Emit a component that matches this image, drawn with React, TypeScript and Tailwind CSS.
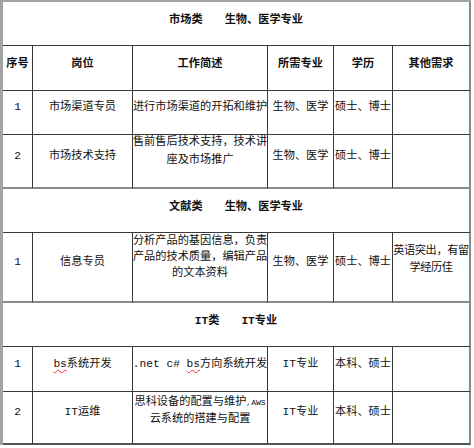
import type { ReactNode } from "react";

const font = { fontFamily: '"Liberation Mono", "Noto Sans CJK SC", monospace' };

function Cell({ children, className = "" }: { children?: ReactNode; className?: string }) {
  return (
    <div className={`flex items-center justify-center text-center whitespace-nowrap border-r border-b border-[#3a3a3a] ${className}`}>
      <div>{children}</div>
    </div>
  );
}

function Section({ left, right }: { left: string; right: string }) {
  return (
    <div className="col-span-6 flex items-center justify-center pb-[7px] font-bold border-r-2 border-r-[#8a8a8a] border-b border-[#3a3a3a]">
      <span>{left}</span>
      <span className="w-[22px]" />
      <span>{right}</span>
    </div>
  );
}

const spell = "underline decoration-wavy decoration-red-500 decoration-1 underline-offset-2";

export default function App() {
  return (
    <div className="w-[474px] h-[448px] bg-white overflow-hidden text-[11.2px] text-[#111]" style={font}>
      <div className="border-l-[3px] border-t-[2px] border-[#a3a3a3] w-[471px]">
        <div className="grid grid-cols-[30px_100px_135px_66px_59px_78px] grid-rows-[44px_45px_44px_54px_44px_70px_44px_45px_53px]">
          <Section left="市场类" right="生物、医学专业" />

          <Cell className="font-bold pb-[7px]">序号</Cell>
          <Cell className="font-bold pb-[7px]">岗位</Cell>
          <Cell className="font-bold pb-[7px]">工作简述</Cell>
          <Cell className="font-bold pb-[7px]">所需专业</Cell>
          <Cell className="font-bold pb-[7px]">学历</Cell>
          <Cell className="font-bold pb-[7px] border-r-2 border-r-[#8a8a8a]">其他需求</Cell>

          <Cell className="pb-[10px]">1</Cell>
          <Cell className="pb-[10px]">市场渠道专员</Cell>
          <Cell className="pb-[10px]">进行市场渠道的开拓和维护</Cell>
          <Cell className="pb-[10px]">生物、医学</Cell>
          <Cell className="pb-[10px]">硕士、博士</Cell>
          <Cell className="border-r-2 border-r-[#8a8a8a]" />

          <Cell className="pb-[10px] border-b-2 border-b-[#8a8a8a]">2</Cell>
          <Cell className="pb-[10px] border-b-2 border-b-[#8a8a8a]">市场技术支持</Cell>
          <Cell className="pb-[20px] leading-[18px] border-b-2 border-b-[#8a8a8a]">
            售前售后技术支持，技术讲
            <br />
            座及市场推广
          </Cell>
          <Cell className="pb-[10px] border-b-2 border-b-[#8a8a8a]">生物、医学</Cell>
          <Cell className="pb-[10px] border-b-2 border-b-[#8a8a8a]">硕士、博士</Cell>
          <Cell className="border-b-2 border-b-[#8a8a8a] border-r-2 border-r-[#8a8a8a]" />

          <Section left="文献类" right="生物、医学专业" />

          <Cell className="pb-[10px] border-b-2 border-b-[#8a8a8a]">1</Cell>
          <Cell className="pb-[10px] border-b-2 border-b-[#8a8a8a]">信息专员</Cell>
          <Cell className="pb-[20px] leading-[16px] border-b-2 border-b-[#8a8a8a]">
            分析产品的基因信息，负责
            <br />
            产品的技术质量，编辑产品
            <br />
            的文本资料
          </Cell>
          <Cell className="pb-[10px] border-b-2 border-b-[#8a8a8a]">生物、医学</Cell>
          <Cell className="pb-[10px] border-b-2 border-b-[#8a8a8a]">硕士、博士</Cell>
          <Cell className="pb-[14px] leading-[17px] tracking-[-0.4px] border-b-2 border-b-[#8a8a8a] border-r-2 border-r-[#8a8a8a]">
            英语突出，有留
            <br />
            学经历佳
          </Cell>

          <Section left="IT类" right="IT专业" />

          <Cell className="pb-[10px]">1</Cell>
          <Cell className="pb-[10px]">
            <span className={spell}>bs</span>系统开发
          </Cell>
          <Cell className="pb-[10px]">
            .net c# <span className={spell}>bs</span>方向系统开发
          </Cell>
          <Cell className="pb-[10px]">IT专业</Cell>
          <Cell className="pb-[10px]">本科、硕士</Cell>
          <Cell className="border-r-2 border-r-[#8a8a8a]" />

          <Cell className="pb-[10px] border-b-2 border-b-[#555]">2</Cell>
          <Cell className="pb-[10px] border-b-2 border-b-[#555]">IT运维</Cell>
          <Cell className="pb-[14px] leading-[17px] border-b-2 border-b-[#555]">
            思科设备的配置与维护<span className="text-[8px]">,AWS</span>
            <br />
            云系统的搭建与配置
          </Cell>
          <Cell className="pb-[10px] border-b-2 border-b-[#555]">IT专业</Cell>
          <Cell className="pb-[10px] border-b-2 border-b-[#555]">本科、硕士</Cell>
          <Cell className="border-b-2 border-b-[#555] border-r-2 border-r-[#8a8a8a]" />
        </div>
      </div>
    </div>
  );
}
